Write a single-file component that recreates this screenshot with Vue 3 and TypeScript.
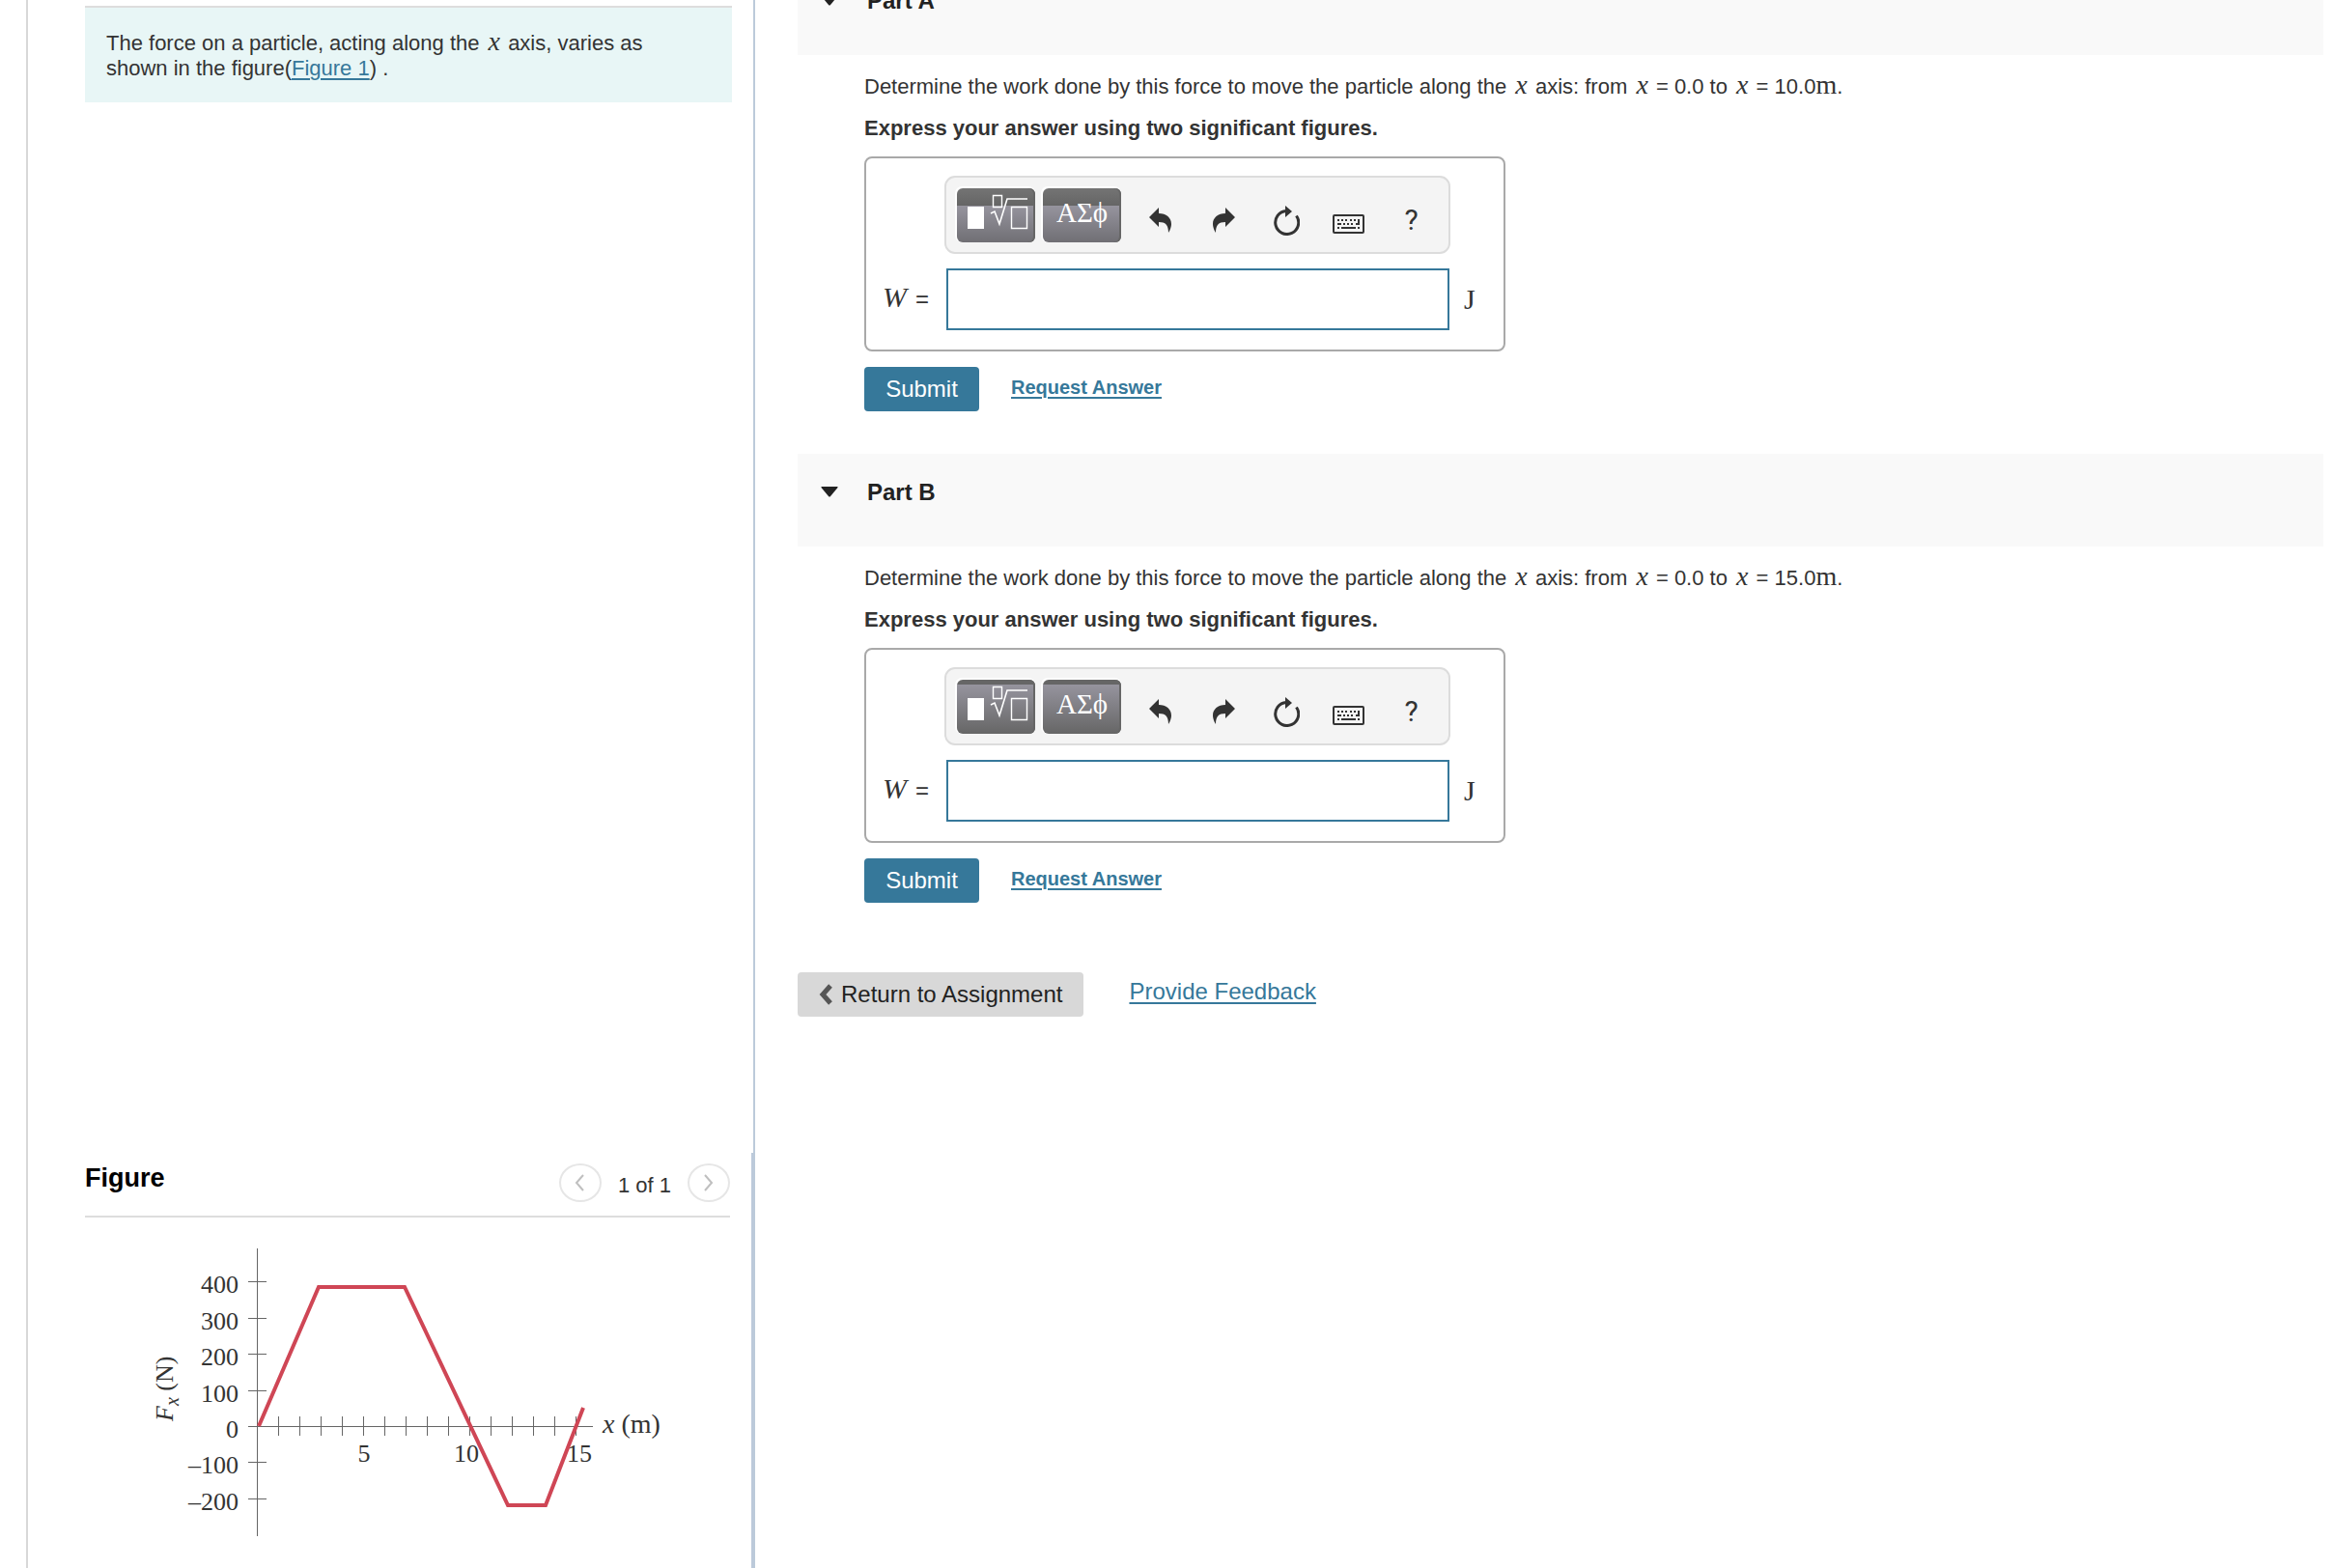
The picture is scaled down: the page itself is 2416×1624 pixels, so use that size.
<script setup lang="ts">
import { ref } from 'vue'

interface Part {
  id: string
  label: string
  limit: string
  glossy: boolean
}

const parts: Part[] = [
  { id: 'a', label: 'Part A', limit: '10.0', glossy: true },
  { id: 'b', label: 'Part B', limit: '15.0', glossy: false },
]

const answers = ref<Record<string, string>>({ a: '', b: '' })

// Plot scale: force in newtons, position in metres
const px = (metres: number): number => 178 + metres * 22
const py = (newtons: number): number => 217 - newtons * 0.374

const forceTicks = [400, 300, 200, 100, 0, -100, -200]
const positionTicks = Array.from({ length: 15 }, (_, i) => i + 1)
const positionLabels = [
  { text: '5', x: 289 },
  { text: '10', x: 395 },
  { text: '15', x: 512 },
]
const minus = (n: number): string => (n < 0 ? '–' + Math.abs(n) : String(n))
</script>

<template>
  <div class="page">
    <aside class="side">
      <section class="problem">
        <p class="intro">
          The force on a particle, acting along the <i class="var">x</i> axis, varies as shown in the figure(<a href="#figure">Figure 1</a>) .
        </p>
      </section>

      <section id="figure" class="figure">
        <header class="figure-head">
          <h2>Figure</h2>
          <div class="pager">
            <button type="button" class="round" aria-label="Previous figure">
              <svg width="12" height="20" viewBox="0 0 12 20"><path d="M9 2 2 10l7 8" /></svg>
            </button>
            <span class="count">1 of 1</span>
            <button type="button" class="round" aria-label="Next figure">
              <svg width="12" height="20" viewBox="0 0 12 20"><path d="m2 2 7 8-7 8" /></svg>
            </button>
          </div>
        </header>

        <svg class="plot" viewBox="0 0 668 363" role="img" aria-label="Force against position">
          <g class="axis">
            <path d="M178.500 32V330M178 216.500H526" />
            <path v-for="n in forceTicks" :key="n" :d="`M169 ${Math.round(py(n)) - 0.5}h19`" />
            <path v-for="m in positionTicks" :key="m" :d="`M${Math.round(px(m)) + 0.5} 206v20`" />
          </g>
          <g class="label">
            <text v-for="n in forceTicks" :key="n" x="159" :y="Math.round(py(n)) + 11" text-anchor="end">{{ minus(n) }}</text>
            <text v-for="l in positionLabels" :key="l.text" :x="l.x" y="253" text-anchor="middle">{{ l.text }}</text>
            <text x="536" y="223" class="wide"><tspan class="it">x</tspan> (m)</text>
            <text transform="translate(91 211) rotate(-90)"><tspan class="it">F</tspan><tspan class="it sub" dy="6">x</tspan><tspan dy="-6"> (N)</tspan></text>
          </g>
          <path class="curve" d="M180 216 242 72H331L438 298H477L516 197" />
        </svg>
      </section>
    </aside>

    <main class="main">
      <section v-for="part in parts" :key="part.id" class="part">
        <header class="part-head">
          <svg class="caret" width="18" height="11" viewBox="0 0 18 11"><path d="M1 0h16q1 0 .500 1L10 10q-1 1-2 0L.500 1Q0 0 1 0Z" /></svg>
          <h2>{{ part.label }}</h2>
        </header>

        <div class="part-body">
          <p class="prompt">
            Determine the work done by this force to move the particle along the <i class="var">x</i> axis: from <i class="var">x</i> = 0.0 to <i class="var">x</i> = {{ part.limit }}<span class="unit">m</span>.
          </p>
          <p class="hint">Express your answer using two significant figures.</p>

          <div class="answer">
            <div class="toolbar">
              <button type="button" class="key" :class="{ glossy: part.glossy }" aria-label="Templates">
                <svg width="81" height="56" viewBox="0 0 81 56">
                  <path d="M11 19h17v23H11z" fill="#fff" />
                  <path d="M37.500 7.500h9v12h-9zM56.500 19.500h16v22h-16z" fill="none" stroke="#fff" stroke-width="1.400" />
                  <path d="m35 26 4-2 5 13 8-26h21" fill="none" stroke="#fff" stroke-width="1.600" />
                </svg>
              </button>
              <button type="button" class="key" :class="{ glossy: part.glossy }">ΑΣϕ</button>
              <button type="button" class="tool" aria-label="Undo">
                <svg width="24" height="27" viewBox="0 0 24 27"><path d="M0 10 10 0v6c11 0 17 9 10 20 0-8-3-11-10-11v5Z" /></svg>
              </button>
              <button type="button" class="tool" aria-label="Redo">
                <svg width="24" height="27" viewBox="0 0 24 27"><path d="M24 10 14 0v6C3 6-3 15 4 26c0-8 3-11 10-11v5Z" /></svg>
              </button>
              <button type="button" class="tool" aria-label="Reset">
                <svg width="28" height="31" viewBox="0 0 28 31">
                  <path d="M14 5.500A12 12 0 1 0 24.500 10.500" fill="none" stroke="#333" stroke-width="3" />
                  <path d="m13 0 7 6-7 6Z" />
                </svg>
              </button>
              <button type="button" class="tool low" aria-label="Keyboard shortcuts">
                <svg width="33" height="20" viewBox="0 0 33 20">
                  <rect x="1" y="1" width="31" height="18" rx="1" fill="none" stroke="#333" stroke-width="2" />
                  <path d="M5 5h2v2H5zm4 0h2v2H9zm4 0h2v2h-2zm5 0h2v2h-2zm4 0h2v2h-2zm4 0h2v6h-4V9h2zM5 9h4v2H5zm6 0h2v2h-2zm4 0h2v2h-2zm4 0h2v2h-2zM5 13h2v2H5zm4 0h15v2H9zm17 0h2v2h-2z" />
                </svg>
              </button>
              <button type="button" class="tool help" aria-label="Help">?</button>
            </div>

            <div class="row">
              <label :for="`answer-${part.id}`"><i class="sym">W</i>=</label>
              <input :id="`answer-${part.id}`" v-model="answers[part.id]" type="text" />
              <span class="sym joule">J</span>
            </div>
          </div>

          <div class="actions">
            <button type="button" class="submit">Submit</button>
            <a href="#" class="request">Request Answer</a>
          </div>
        </div>
      </section>

      <footer class="foot">
        <button type="button" class="return">
          <svg width="14" height="22" viewBox="0 0 14 22"><path d="M12 2 4 11l8 9" /></svg>
          Return to Assignment
        </button>
        <a href="#" class="feedback">Provide Feedback</a>
      </footer>
    </main>
  </div>
</template>

<style>
body {
  margin: 0;
  background: #fff;
}
</style>

<style scoped>
.page {
  display: flex;
  min-height: 100vh;
  overflow: hidden;
  color: #333;
  font: 22px/28px "Liberation Sans", Arial, sans-serif;
}

h2,
p {
  margin: 0;
}

a {
  color: #36789a;
  text-underline-offset: 3px;
  text-decoration-thickness: 2px;
}

button {
  margin: 0;
  padding: 0;
  border: 0;
  background: none;
  color: inherit;
  font: inherit;
  cursor: pointer;
}

svg {
  display: block;
}

.var,
.unit,
.sym {
  font-family: "Liberation Serif", "Times New Roman", serif;
  font-size: 28px;
  line-height: 0;
}

.var {
  padding: 0 2px 0 3px;
}

/* Left column */
.side {
  display: flex;
  flex: 0 0 753px;
  flex-direction: column;
  margin-left: 27px;
  border-left: 2px solid #d8d8d8;
}

.problem {
  flex: 1;
  padding: 6px 22px 0 59px;
  border-right: 2px solid #bccada;
}

.intro {
  padding: 24px 44px 22px 22px;
  border-top: 2px solid #ddd;
  background: #e8f6f6;
  line-height: 26px;
}

.figure {
  padding: 0 22px 0 59px;
  border-right: 4px solid #bccada;
}

.figure-head {
  display: flex;
  justify-content: space-between;
  padding: 9px 0 14px;
  border-bottom: 2px solid #ddd;
}

.figure-head h2 {
  color: #000;
  font-size: 27px;
  line-height: 34px;
}

.pager {
  display: flex;
  gap: 17px;
  padding-top: 2px;
}

.round {
  display: flex;
  align-items: center;
  justify-content: center;
  box-sizing: border-box;
  width: 44px;
  height: 40px;
  border: 2px solid #e6e6e6;
  border-radius: 50%;
}

.round path {
  fill: none;
  stroke: #bfbfbf;
  stroke-width: 2;
}

.count {
  height: 40px;
  line-height: 46px;
}

.plot {
  width: 100%;
}

.axis path {
  fill: none;
  stroke: #666;
  stroke-width: 1;
}

.label text {
  fill: #333;
  font: 26px "Liberation Serif", "Times New Roman", serif;
}

.label .wide {
  font-size: 28px;
}

.label .it {
  font-style: italic;
}

.label .sub {
  font-size: 20px;
}

.curve {
  fill: none;
  stroke: #cf4655;
  stroke-width: 4;
}

/* Right column, scrolled a little past its first heading */
.main {
  flex: 1;
  min-width: 0;
  margin-top: -39px;
  padding: 0 10px 0 44px;
}

.part-head {
  display: flex;
  align-items: flex-start;
  gap: 30px;
  height: 70px;
  padding: 26px 24px 0;
  background: #f9f9f9;
  color: #222;
}

.part-head h2 {
  font-size: 24px;
  line-height: 28px;
}

.caret {
  margin-top: 8px;
  fill: #222;
}

.part-body {
  padding: 19px 0 44px 69px;
}

.hint {
  margin: 15px 0;
  font-weight: bold;
}

.answer {
  box-sizing: border-box;
  width: 664px;
  padding: 18px 0 20px;
  border: 2px solid #a9a9a9;
  border-radius: 8px;
}

.toolbar {
  display: flex;
  align-items: center;
  box-sizing: border-box;
  width: 524px;
  height: 81px;
  margin-left: 81px;
  padding-left: 11px;
  border: 2px solid #dcdcdc;
  border-radius: 11px;
  background: #f4f4f4;
}

.key {
  width: 81px;
  height: 56px;
  margin-right: 8px;
  padding-bottom: 6px;
  border-radius: 6px;
  background: linear-gradient(#666 5px, #96949e 5px, #666);
  box-shadow: inset -2px 0 #666, -1px -1px 0 1px #fff;
  color: #fff;
  font: 29px/48px "Liberation Serif", "DejaVu Serif", serif;
  text-align: center;
}

.key:first-child {
  padding: 0;
}

.key.glossy {
  background: linear-gradient(#747474, #656565 18px, #96949e 18px, #706f74);
}

.tool {
  display: flex;
  align-items: center;
  justify-content: center;
  width: 65px;
  height: 56px;
  padding-top: 11px;
}

.tool.low {
  padding-top: 18px;
}

.tool.help {
  font: 30px/36px Roboto, "Open Sans", sans-serif;
}

.tool svg {
  fill: #333;
}

.row {
  display: flex;
  align-items: center;
  margin-top: 15px;
}

.row label {
  display: flex;
  align-items: baseline;
  gap: 9px;
  box-sizing: border-box;
  width: 83px;
  padding-left: 17px;
  font-size: 24px;
}

.row .sym {
  font-size: 30px;
}

.row input {
  box-sizing: border-box;
  width: 521px;
  height: 64px;
  padding: 0 12px;
  border: 2px solid #36789a;
  border-radius: 0;
  background: #fff;
  color: inherit;
  font: inherit;
}

.joule {
  margin-left: 15px;
}

.actions {
  display: flex;
  align-items: center;
  gap: 33px;
  margin-top: 16px;
}

.submit {
  width: 119px;
  height: 46px;
  border-radius: 4px;
  background: #36789a;
  color: #fff;
  font-size: 24px;
}

.request {
  padding-bottom: 4px;
  font-size: 20px;
  font-weight: bold;
}

.foot {
  display: flex;
  align-items: center;
  gap: 47px;
  margin-top: 28px;
  font-size: 24px;
}

.return {
  display: flex;
  align-items: center;
  gap: 9px;
  height: 46px;
  padding: 0 22px;
  border-radius: 4px;
  background: #d8d8d8;
  color: #222;
}

.return path {
  fill: none;
  stroke: #555;
  stroke-width: 5;
}

.feedback {
  padding-bottom: 6px;
}
</style>
